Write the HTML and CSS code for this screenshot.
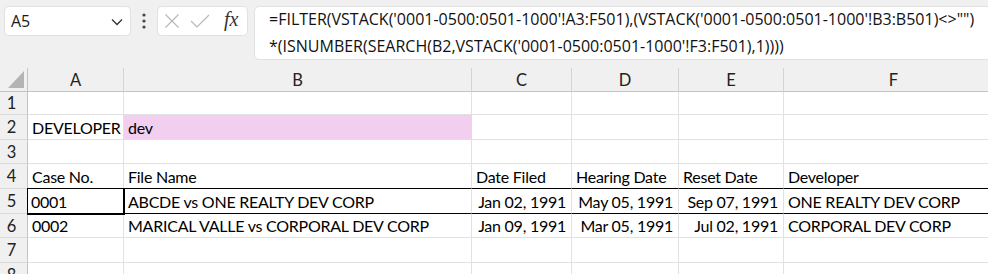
FILE: index.html
```html
<!DOCTYPE html>
<html>
<head>
<meta charset="utf-8">
<link rel="stylesheet" href="styles.css">
</head>
<body>
<div class="toolbar">
  <div class="namebox">
    <span class="namebox-text">A5</span>
    <svg class="chev" width="12" height="8" viewBox="0 0 12 8"><polyline points="1,1.5 6,6.5 11,1.5" fill="none" stroke="#333" stroke-width="1.3"/></svg>
  </div>
  <div class="dots">
    <svg width="4" height="16" viewBox="0 0 4 16"><circle cx="2" cy="2" r="1.6" fill="#444"/><circle cx="2" cy="8" r="1.6" fill="#444"/><circle cx="2" cy="14" r="1.6" fill="#444"/></svg>
  </div>
  <div class="fxbox">
    <svg class="ico" width="16" height="16" viewBox="0 0 16 16"><path d="M1.5 1.5 L14.5 14.5 M14.5 1.5 L1.5 14.5" stroke="#b8b8b8" stroke-width="1.2" fill="none"/></svg>
    <svg class="ico" width="20" height="16" viewBox="0 0 20 16"><polyline points="1,8 7,14 19,2" stroke="#b8b8b8" stroke-width="1.2" fill="none"/></svg>
    <span class="fx">fx</span>
  </div>
  <div class="formula">
    <div class="fline">=FILTER(VSTACK('0001-0500:0501-1000'!A3:F501),(VSTACK('0001-0500:0501-1000'!B3:B501)&lt;&gt;"")</div>
    <div class="fline">*(ISNUMBER(SEARCH(B2,VSTACK('0001-0500:0501-1000'!F3:F501),1))))</div>
  </div>
</div>
<div class="sheet">
  <div class="corner"><span class="tri"></span></div>
  <div class="colhead">A</div><div class="colhead">B</div><div class="colhead">C</div><div class="colhead">D</div><div class="colhead">E</div><div class="colhead">F</div>

  <div class="rowhead r1">1</div><div class="cell r1"></div><div class="cell r1"></div><div class="cell r1"></div><div class="cell r1"></div><div class="cell r1"></div><div class="cell r1"></div>

  <div class="rowhead r2">2</div><div class="cell r2">DEVELOPER</div><div class="cell r2 fill">dev</div><div class="cell r2"></div><div class="cell r2"></div><div class="cell r2"></div><div class="cell r2"></div>

  <div class="rowhead r3">3</div><div class="cell r3"></div><div class="cell r3"></div><div class="cell r3"></div><div class="cell r3"></div><div class="cell r3"></div><div class="cell r3"></div>

  <div class="rowhead r4">4</div><div class="cell r4 bb">Case No.</div><div class="cell r4 bb">File Name</div><div class="cell r4 bb">Date Filed</div><div class="cell r4 bb">Hearing Date</div><div class="cell r4 bb">Reset Date</div><div class="cell r4 bb">Developer</div>

  <div class="rowhead r5">5</div><div class="cell r5 bb active">0001</div><div class="cell r5 bb">ABCDE vs ONE REALTY DEV CORP</div><div class="cell r5 bb num">Jan 02, 1991</div><div class="cell r5 bb num">May 05, 1991</div><div class="cell r5 bb num">Sep 07, 1991</div><div class="cell r5 bb">ONE REALTY DEV CORP</div>

  <div class="rowhead r6">6</div><div class="cell r6">0002</div><div class="cell r6">MARICAL VALLE vs CORPORAL DEV CORP</div><div class="cell r6 num">Jan 09, 1991</div><div class="cell r6 num">Mar 05, 1991</div><div class="cell r6 num">Jul 02, 1991</div><div class="cell r6">CORPORAL DEV CORP</div>

  <div class="rowhead r7">7</div><div class="cell r7"></div><div class="cell r7"></div><div class="cell r7"></div><div class="cell r7"></div><div class="cell r7"></div><div class="cell r7"></div>

  <div class="rowhead r8">8</div><div class="cell r8"></div><div class="cell r8"></div><div class="cell r8"></div><div class="cell r8"></div><div class="cell r8"></div><div class="cell r8"></div>
</div>
</body>
</html>
```

FILE: styles.css
```css
html, body {
  margin: 0;
  padding: 0;
}
body {
  background: #f0f0f0;
  width: 988px;
  height: 274px;
  overflow: hidden;
  font-family: "Lato", "Open Sans", sans-serif;
  color: #000;
}
.toolbar {
  display: flex;
  align-items: flex-start;
  height: 68px;
  padding: 6px 0 0 4px;
  box-sizing: border-box;
}
.namebox {
  width: 127px;
  height: 30px;
  box-sizing: border-box;
  background: #fff;
  border: 1px solid #e1e1e1;
  border-radius: 5px;
  display: flex;
  align-items: center;
  justify-content: space-between;
  padding: 0 7px 0 6px;
  font-family: "Open Sans", "Noto Sans", sans-serif;
  font-size: 16px;
  color: #1a1a1a;
}
.chev {
  margin-top: 2px;
}
.dots {
  width: 26px;
  height: 30px;
  display: flex;
  align-items: center;
  justify-content: center;
}
.fxbox {
  width: 91px;
  height: 30px;
  box-sizing: border-box;
  background: #fff;
  border: 1px solid #e1e1e1;
  border-radius: 5px;
  display: flex;
  align-items: center;
  padding: 0 0 0 6px;
  gap: 12px;
}
.fxbox .ico + .ico {
  margin-left: -2px;
}
.fx {
  font-family: "Liberation Serif", serif;
  font-style: italic;
  font-size: 20px;
  color: #333;
  margin-left: 2px;
  margin-top: -3px;
}
.formula {
  flex: 1;
  margin-left: 6px;
  margin-right: -20px;
  height: 54px;
  box-sizing: border-box;
  background: #fff;
  border: 1px solid #e1e1e1;
  border-radius: 5px;
  padding: 0 0 0 14px;
  font-family: "Open Sans", "Noto Sans", sans-serif;
  font-size: 16px;
  color: #111;
}
.fline {
  height: 27px;
  line-height: 25px;
  white-space: nowrap;
}
.sheet {
  display: grid;
  grid-template-columns: 28px 96px 348px 100px 107px 105px 220px;
  grid-template-rows: 24px 23px 25px 24px 25px 25px 24px 25px 25px;
  background: #fff;
}
.sheet > div {
  box-sizing: border-box;
  white-space: nowrap;
}
.corner {
  background: #f0f0f0;
  border-right: 1px solid #c4c4c4;
  border-bottom: 1px solid #c4c4c4;
  position: relative;
}
.tri {
  position: absolute;
  left: 8px;
  bottom: 3px;
  width: 0;
  height: 0;
  border-left: 16px solid transparent;
  border-bottom: 17px solid #b4b4b4;
}
.colhead {
  background: #f0f0f0;
  border-right: 1px solid #d4d4d4;
  border-bottom: 1px solid #c4c4c4;
  display: flex;
  align-items: center;
  justify-content: center;
  font-size: 16.5px;
  color: #222;
  padding-top: 1px;
}
.rowhead {
  background: #f0f0f0;
  border-right: 1px solid #c4c4c4;
  border-bottom: 1px solid #d9d9d9;
  display: flex;
  align-items: center;
  justify-content: center;
  padding-right: 4px;
  font-size: 16.5px;
  color: #222;
}
.cell {
  border-right: 1px solid #e1e1e1;
  border-bottom: 1px solid #e1e1e1;
  display: flex;
  align-items: center;
  padding: 0 4px;
  font-size: 16px;
  letter-spacing: -0.25px;
}
.cell.num {
  justify-content: flex-end;
  padding-right: 5px;
}
.cell.fill {
  background: #f2ceef;
  border-right-color: #f2ceef;
}
.cell.bb {
  border-bottom-color: #000;
}
.cell.active {
  position: relative;
  padding-left: 3px;
}
.cell.active::after {
  content: "";
  position: absolute;
  left: -1px;
  top: -1px;
  right: -2px;
  bottom: -2px;
  border: 2px solid #000;
  border-top-width: 1px;
  border-left-width: 1px;
  pointer-events: none;
}
```
